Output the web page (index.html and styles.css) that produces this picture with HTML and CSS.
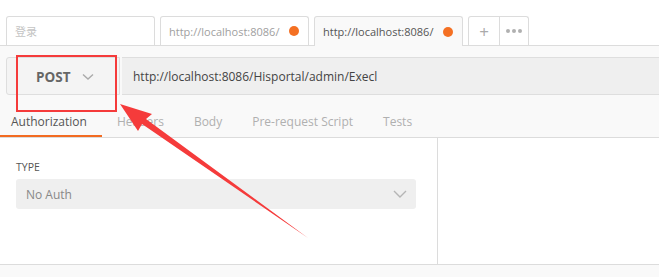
FILE: index.html
```html
<!DOCTYPE html>
<html lang="zh-CN">
<head>
  <meta charset="UTF-8" />
  <title>Postman</title>
  <link rel="stylesheet" href="styles.css">
</head>
<body>
  <div class="tabs">
    <div class="tab"><span class="placeholder">登录</span></div>
    <div class="tab"><span>http://localhost:8086/</span><i class="dot"></i></div>
    <div class="tab active"><span>http://localhost:8086/</span><i class="dot"></i></div>
    <div class="tab-tools">
      <div class="tool">+</div>
      <div class="tool more"><i></i><i></i><i></i></div>
    </div>
  </div>

  <div class="main">
    <div class="request">
      <div class="method">
        <span>POST</span>
        <svg width="12" height="8" viewBox="0 0 12 8"><path d="M1 1.5 L6 6 L11 1.5" fill="none" stroke="#aaa" stroke-width="1.4"/></svg>
      </div>
      <div class="url">http://localhost:8086/Hisportal/admin/Execl</div>
    </div>

    <div class="subtabs">
      <div class="subtab selected">Authorization</div>
      <div class="subtab">Headers</div>
      <div class="subtab">Body</div>
      <div class="subtab">Pre-request Script</div>
      <div class="subtab">Tests</div>
    </div>

    <div class="panes">
      <div class="pane-left">
        <div class="label">TYPE</div>
        <div class="select">
          <span>No Auth</span>
          <svg width="14" height="8" viewBox="0 0 14 8"><path d="M1 1 L7 7 L13 1" fill="none" stroke="#b5b5b5" stroke-width="1.4"/></svg>
        </div>
      </div>
      <div class="pane-right"></div>
    </div>
  </div>

  <!-- annotation -->
  <div class="mark"></div>
  <svg class="arrow" width="659" height="277" viewBox="0 0 659 277">
    <polygon points="120,104 152,114 146,119 308,238 142,124 138,131" fill="#f53b3b"/>
  </svg>
</body>
</html>
```

FILE: styles.css
```css
body {
  margin: 0;
  font-family: "Open Sans", "Noto Sans CJK SC", sans-serif;
  font-size: 12px;
  background: #f9f9f9;
  width: 659px;
  height: 277px;
  overflow: hidden;
  position: relative;
}

.tabs {
  display: flex;
  gap: 5px;
  padding: 16px 0 0 6px;
  background: #fff;
  border-bottom: 1px solid #dcdcdc;
  height: 29px;
}

.tab {
  width: 130px;
  height: 28px;
  border: 1px solid #dcdcdc;
  border-bottom: none;
  border-radius: 3px 3px 0 0;
  background: #fff;
  display: flex;
  align-items: center;
  justify-content: space-between;
  padding: 0 9px 0 8px;
  box-sizing: content-box;
  font-size: 11px;
  color: #a0a0a0;
}

.tab.active {
  background: #f9f9f9;
  height: 29px;
  color: #555;
}

.placeholder {
  color: #c4c4c4;
}

.dot {
  width: 10px;
  height: 10px;
  border-radius: 50%;
  background: #f47023;
}

.tab-tools {
  display: flex;
  border: 1px solid #dcdcdc;
  border-bottom: none;
  border-radius: 3px 3px 0 0;
  height: 28px;
  background: #fff;
}

.tool {
  width: 30px;
  display: flex;
  align-items: center;
  justify-content: center;
  color: #aaa;
  font-size: 17px;
}

.tool.more {
  width: 28px;
  border-left: 1px solid #dcdcdc;
  gap: 2px;
}

.tool.more i {
  width: 4px;
  height: 4px;
  border-radius: 50%;
  background: #b0b0b0;
}

.request {
  display: flex;
  padding: 11px 0 0 6px;
}

.method {
  width: 114px;
  height: 38px;
  box-sizing: border-box;
  border: 1px solid #dedede;
  border-radius: 3px 0 0 3px;
  background: #f4f4f4;
  display: flex;
  align-items: center;
  padding: 2px 0 0 29px;
  gap: 12px;
  font-size: 13.5px;
  font-weight: bold;
  color: #666;
}

.url {
  flex: 1;
  height: 38px;
  box-sizing: border-box;
  margin-left: 2px;
  border-top: 1px solid #dedede;
  border-bottom: 1px solid #dedede;
  background: #efefef;
  display: flex;
  align-items: center;
  padding-left: 11px;
  font-size: 12px;
  color: #444;
}

.subtabs {
  display: flex;
  margin-top: 14px;
  height: 28px;
  border-bottom: 1px solid #dcdcdc;
}

.subtab {
  padding: 0 15px 0 15px;
  line-height: 26px;
  font-size: 12px;
  color: #b0b0b0;
}

.subtab:first-child {
  padding-left: 11px;
}

.subtab.selected {
  color: #555;
  border-bottom: 2px solid #f26b21;
}

.panes {
  display: flex;
  height: 126px;
  background: #fff;
  border-bottom: 1px solid #dcdcdc;
}

.pane-left {
  width: 421px;
  padding: 22px 0 0 16px;
  border-right: 1px solid #dcdcdc;
}

.label {
  font-size: 10.5px;
  color: #555;
  height: 19px;
}

.select {
  width: 400px;
  height: 30px;
  box-sizing: border-box;
  background: #efefef;
  border-radius: 3px;
  display: flex;
  align-items: center;
  justify-content: space-between;
  padding: 0 9px 0 10px;
  color: #888;
}

.pane-right {
  flex: 1;
}

.mark {
  position: absolute;
  left: 16px;
  top: 55px;
  width: 97px;
  height: 53px;
  border: 2px solid #f53b3b;
}

.arrow {
  position: absolute;
  left: 0;
  top: 0;
}
```
